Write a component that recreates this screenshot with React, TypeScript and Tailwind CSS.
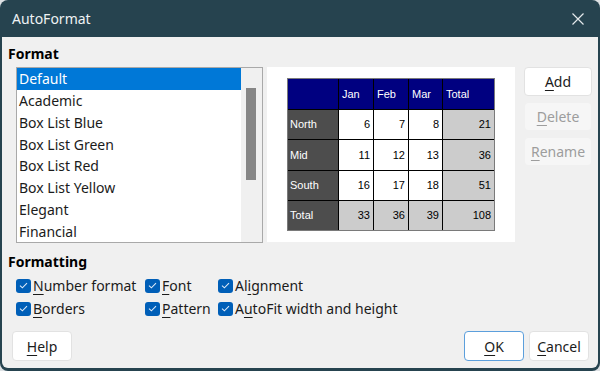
import React from "react";

const ui = "font-['Noto_Sans',sans-serif]";

const styles = [
  "Default",
  "Academic",
  "Box List Blue",
  "Box List Green",
  "Box List Red",
  "Box List Yellow",
  "Elegant",
  "Financial",
];

function Mn({ pre = "", u, post = "" }: { pre?: string; u: string; post?: string }) {
  return (
    <span>
      {pre}
      <span className="underline underline-offset-[3px] decoration-1">{u}</span>
      {post}
    </span>
  );
}

function Check({ children }: { children: React.ReactNode }) {
  return (
    <div className="flex h-[19px] items-center gap-[2px]">
      <span className="flex h-[14px] w-[15px] items-center justify-center rounded-[3px] bg-[#005fb8]">
        <svg width="9" height="7" viewBox="0 0 9 7" fill="none">
          <path d="M1 3.6 L3.4 5.8 L8 1.2" stroke="#dce9f7" strokeWidth="1.1" />
        </svg>
      </span>
      <span className="text-[14px] leading-[19px] text-[#1b1b1b]">{children}</span>
    </div>
  );
}

function Button({
  children,
  disabled,
  primary,
  className = "",
}: {
  children: React.ReactNode;
  disabled?: boolean;
  primary?: boolean;
  className?: string;
}) {
  const base = "flex items-center justify-center rounded-[4px] border text-[14px]";
  const look = disabled
    ? "border-[#f0f0f0] bg-[#f6f6f6] text-[#9d9d9d]"
    : primary
      ? "border-[#5c9fdc] bg-white text-[#1b1b1b]"
      : "border-[#e2e2e2] bg-white text-[#1b1b1b]";
  return <div className={`${base} ${look} ${className}`}>{children}</div>;
}

const rows = [
  { label: "North", vals: [6, 7, 8], total: 21 },
  { label: "Mid", vals: [11, 12, 13], total: 36 },
  { label: "South", vals: [16, 17, 18], total: 51 },
];

function Preview() {
  const cell = "flex items-center text-[11px] font-['Liberation_Sans_Narrow','Liberation_Sans',sans-serif]";
  return (
    <div className="border border-[#7a7a7a]">
      <div className="grid grid-cols-[50px_34px_34px_33px_51px] grid-rows-[30px_29px_30px_29px_29px] gap-px bg-black">
        <div className={`${cell} bg-[#000080]`} />
        {["Jan", "Feb", "Mar", "Total"].map((h) => (
          <div key={h} className={`${cell} bg-[#000080] pl-[3px] text-white`}>
            {h}
          </div>
        ))}
        {rows.map((r) => (
          <React.Fragment key={r.label}>
            <div className={`${cell} bg-[#4d4d4d] pl-[2px] text-white`}>{r.label}</div>
            {r.vals.map((v, i) => (
              <div key={i} className={`${cell} justify-end bg-white pr-[3px] text-black`}>
                {v}
              </div>
            ))}
            <div className={`${cell} justify-end bg-[#cccccc] pr-[3px] text-black`}>{r.total}</div>
          </React.Fragment>
        ))}
        <div className={`${cell} bg-[#4d4d4d] pl-[2px] text-white`}>Total</div>
        {[33, 36, 39, 108].map((v) => (
          <div key={v} className={`${cell} justify-end bg-[#cccccc] pr-[3px] text-black`}>
            {v}
          </div>
        ))}
      </div>
    </div>
  );
}

export default function App() {
  return (
    <div className={`h-[371px] w-[600px] bg-[#dde1e4] ${ui}`}>
      <div className="flex h-[371px] flex-col overflow-hidden rounded-[8px] bg-[#26434f] px-[2px] pb-[3px]">
        {/* title bar */}
        <div className="flex h-[37px] shrink-0 items-center justify-between pl-[10px] pr-[14px]">
          <span className="text-[14px] text-[#eef2f4]">AutoFormat</span>
          <svg width="12" height="12" viewBox="0 0 12 12">
            <path d="M0.5 0.5 L11.5 11.5 M11.5 0.5 L0.5 11.5" stroke="#e3e8eb" strokeWidth="1.2" />
          </svg>
        </div>

        {/* body */}
        <div className="flex flex-1 flex-col rounded-b-[6px] bg-[#f0f0f0]">
          <div className="mt-[7px] pl-[6px] text-[14px] font-bold leading-[19px] text-black">Format</div>

          <div className="mt-[4px] flex items-start">
            {/* list */}
            <div className="ml-[14px] flex h-[176px] w-[247px] border border-[#a9a9a9] bg-white">
              <div className="flex-1 overflow-hidden">
                {styles.map((s, i) => (
                  <div
                    key={s}
                    className={`flex h-[21.75px] items-center pl-[2px] text-[14px] ${
                      i === 0 ? "bg-[#0078d7] text-white" : "text-[#1b1b1b]"
                    }`}
                  >
                    {s}
                  </div>
                ))}
              </div>
              <div className="w-[21px] bg-[#f0f0f0] pl-[5px] pt-[20px]">
                <div className="h-[92px] w-[10px] bg-[#868686]" />
              </div>
            </div>

            {/* preview */}
            <div className="ml-[4px] flex h-[175px] w-[248px] items-start justify-center bg-white pt-[11px]">
              <Preview />
            </div>

            {/* side buttons */}
            <div className="ml-[9px] flex w-[68px] flex-col gap-[6px]">
              <Button className="h-[29px]">
                <Mn u="A" post="dd" />
              </Button>
              <Button className="h-[29px]" disabled>
                <Mn u="D" post="elete" />
              </Button>
              <Button className="h-[29px]" disabled>
                <Mn u="R" post="ename" />
              </Button>
            </div>
          </div>

          <div className="mt-[9px] pl-[6px] text-[14px] font-bold leading-[19px] text-black">Formatting</div>

          <div className="mt-[5px] ml-[14px] grid grid-cols-[129px_73px_auto] gap-y-[4px]">
            <Check>
              <Mn u="N" post="umber format" />
            </Check>
            <Check>
              <Mn u="F" post="ont" />
            </Check>
            <Check>
              <Mn pre="Al" u="i" post="gnment" />
            </Check>
            <Check>
              <Mn u="B" post="orders" />
            </Check>
            <Check>
              <Mn u="P" post="attern" />
            </Check>
            <Check>
              <Mn pre="A" u="u" post="toFit width and height" />
            </Check>
          </div>

          <div className="mt-[13px] flex items-center pl-[10px] pr-[9px]">
            <Button className="h-[30px] w-[60px]">
              <Mn u="H" post="elp" />
            </Button>
            <div className="flex-1" />
            <Button className="h-[30px] w-[60px]" primary>
              <Mn u="O" post="K" />
            </Button>
            <Button className="ml-[5px] h-[30px] w-[60px]">
              <Mn u="C" post="ancel" />
            </Button>
          </div>
        </div>
      </div>
    </div>
  );
}
